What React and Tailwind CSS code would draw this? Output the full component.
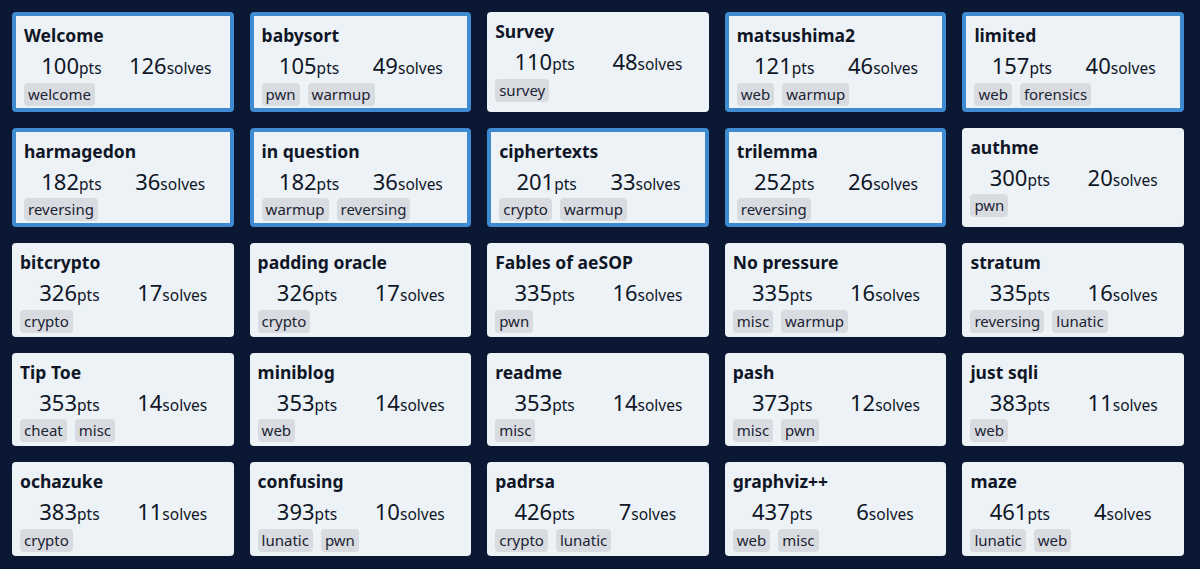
const challenges = [
  { name: 'Welcome', pts: 100, solves: 126, tags: ['welcome'], solved: true },
  { name: 'babysort', pts: 105, solves: 49, tags: ['pwn', 'warmup'], solved: true },
  { name: 'Survey', pts: 110, solves: 48, tags: ['survey'], solved: false },
  { name: 'matsushima2', pts: 121, solves: 46, tags: ['web', 'warmup'], solved: true },
  { name: 'limited', pts: 157, solves: 40, tags: ['web', 'forensics'], solved: true },
  { name: 'harmagedon', pts: 182, solves: 36, tags: ['reversing'], solved: true },
  { name: 'in question', pts: 182, solves: 36, tags: ['warmup', 'reversing'], solved: true },
  { name: 'ciphertexts', pts: 201, solves: 33, tags: ['crypto', 'warmup'], solved: true },
  { name: 'trilemma', pts: 252, solves: 26, tags: ['reversing'], solved: true },
  { name: 'authme', pts: 300, solves: 20, tags: ['pwn'], solved: false },
  { name: 'bitcrypto', pts: 326, solves: 17, tags: ['crypto'], solved: false },
  { name: 'padding oracle', pts: 326, solves: 17, tags: ['crypto'], solved: false },
  { name: 'Fables of aeSOP', pts: 335, solves: 16, tags: ['pwn'], solved: false },
  { name: 'No pressure', pts: 335, solves: 16, tags: ['misc', 'warmup'], solved: false },
  { name: 'stratum', pts: 335, solves: 16, tags: ['reversing', 'lunatic'], solved: false },
  { name: 'Tip Toe', pts: 353, solves: 14, tags: ['cheat', 'misc'], solved: false },
  { name: 'miniblog', pts: 353, solves: 14, tags: ['web'], solved: false },
  { name: 'readme', pts: 353, solves: 14, tags: ['misc'], solved: false },
  { name: 'pash', pts: 373, solves: 12, tags: ['misc', 'pwn'], solved: false },
  { name: 'just sqli', pts: 383, solves: 11, tags: ['web'], solved: false },
  { name: 'ochazuke', pts: 383, solves: 11, tags: ['crypto'], solved: false },
  { name: 'confusing', pts: 393, solves: 10, tags: ['lunatic', 'pwn'], solved: false },
  { name: 'padrsa', pts: 426, solves: 7, tags: ['crypto', 'lunatic'], solved: false },
  { name: 'graphviz++', pts: 437, solves: 6, tags: ['web', 'misc'], solved: false },
  { name: 'maze', pts: 461, solves: 4, tags: ['lunatic', 'web'], solved: false },
];

function ChallengeCard({ c }) {
  return (
    <div
      className={
        c.solved
          ? 'bg-[#edf2f7] rounded-[4px] border-[4px] border-[#3f8bd1] px-2 pt-2 pb-[2px]'
          : 'bg-[#edf2f7] rounded-[4px] px-2 pt-2 pb-1'
      }
    >
      <div className="text-[17.5px] leading-[22px] font-bold text-[#0f1626] whitespace-nowrap">{c.name}</div>
      <div className="grid grid-cols-2 text-center mt-[8px] text-[22px] leading-[22px] text-[#0f1626]">
        <div className="pr-1">
          <span className="leading-none">{c.pts}</span>
          <span className="text-[15.5px] leading-none">pts</span>
        </div>
        <div className="pr-1">
          <span className="leading-none">{c.solves}</span>
          <span className="text-[15.5px] leading-none">solves</span>
        </div>
      </div>
      <div className="flex gap-2 mt-[6px]">
        {c.tags.map((t) => (
          <span
            key={t}
            className="bg-[#d8dce1] rounded-[4px] px-[4px] h-[23px] leading-[23px] text-[15px] text-[#1c2333]"
          >
            {t}
          </span>
        ))}
      </div>
    </div>
  );
}

export default function App() {
  return (
    <div
      className="min-h-screen bg-[#0b1833] pl-3 pr-4 pt-3 pb-3"
      style={{ fontFamily: '"Noto Sans", "Open Sans", sans-serif' }}
    >
      <div className="grid grid-cols-5 gap-x-4 gap-y-4">
        {challenges.map((c) => (
          <ChallengeCard key={c.name} c={c} />
        ))}
      </div>
    </div>
  );
}
